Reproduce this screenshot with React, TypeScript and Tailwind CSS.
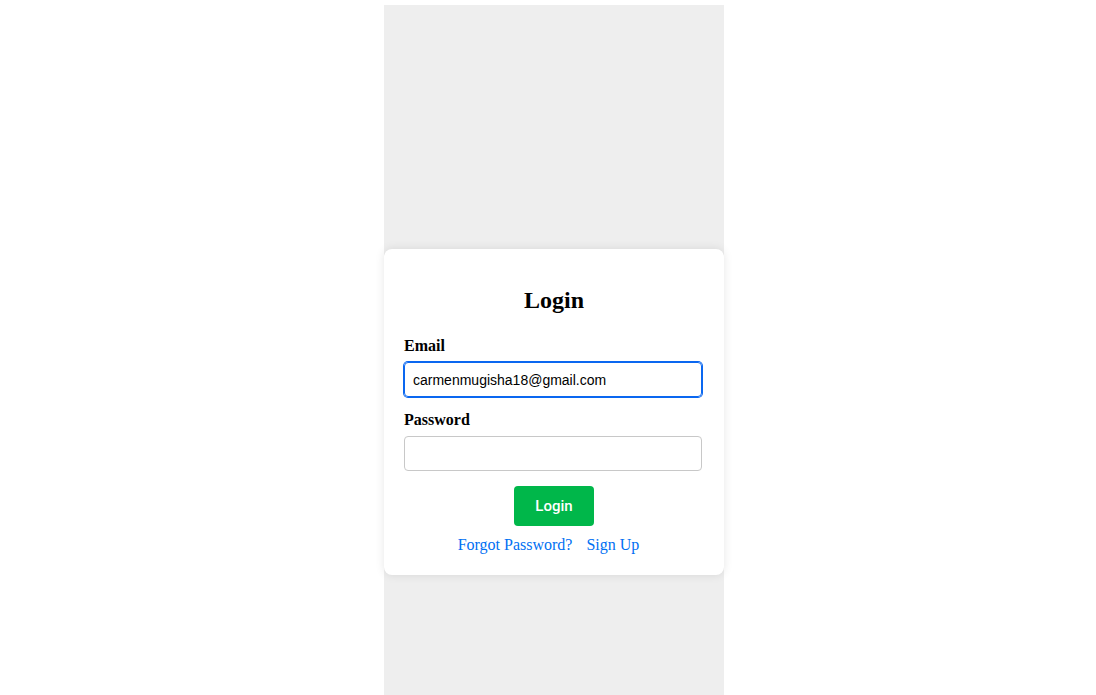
import { useState } from "react";

export default function App() {
  const [email, setEmail] = useState("carmenmugisha18@gmail.com");
  const [password, setPassword] = useState("");

  const serif = { fontFamily: '"Liberation Serif", "Times New Roman", serif' };

  return (
    <div className="h-[695px] w-full overflow-hidden bg-white pt-[5px]" style={serif}>
      <div className="ml-[384px] flex h-[814px] w-[340px] items-center bg-[#eeeeee]">
        <form
          onSubmit={(e) => e.preventDefault()}
          className="w-full rounded-lg bg-white px-5 pt-5 pb-[21px] shadow-[0_0_10px_rgba(0,0,0,0.1)]"
        >
          <h2 className="mt-[18px] mb-[23px] text-center text-[24px] leading-[27px] font-bold text-black">
            Login
          </h2>

          <label className="mb-[7px] block text-[16px] leading-[18px] font-bold text-black">Email</label>
          <input
            type="email"
            value={email}
            onChange={(e) => setEmail(e.target.value)}
            className="block h-[35px] w-[298px] rounded-[4px] border border-[#0a67f0] px-[8px] text-[14px] text-black outline-none ring-1 ring-[#0a67f0] font-['Liberation_Sans',Arial,sans-serif]"
          />

          <label className="mt-[14px] mb-[7px] block text-[16px] leading-[18px] font-bold text-black">Password</label>
          <input
            type="password"
            value={password}
            onChange={(e) => setPassword(e.target.value)}
            className="block h-[35px] w-[298px] rounded-[4px] border border-[#c8c8c8] px-[8px] text-[14px] text-black outline-none font-['Liberation_Sans',Arial,sans-serif]"
          />

          <div className="mt-[15px] flex justify-center">
            <button
              type="submit"
              className="h-[40px] w-[80px] rounded-[4px] bg-[#00b74a] text-[15px] font-medium text-white font-['Roboto',Arial,sans-serif]"
            >
              Login
            </button>
          </div>

          <div className="mt-[10px] flex justify-center gap-[14px] pr-[11px] text-[16px] leading-[18px] text-[#0070f3]">
            <a href="#">Forgot Password?</a>
            <a href="#">Sign Up</a>
          </div>
        </form>
      </div>
    </div>
  );
}
